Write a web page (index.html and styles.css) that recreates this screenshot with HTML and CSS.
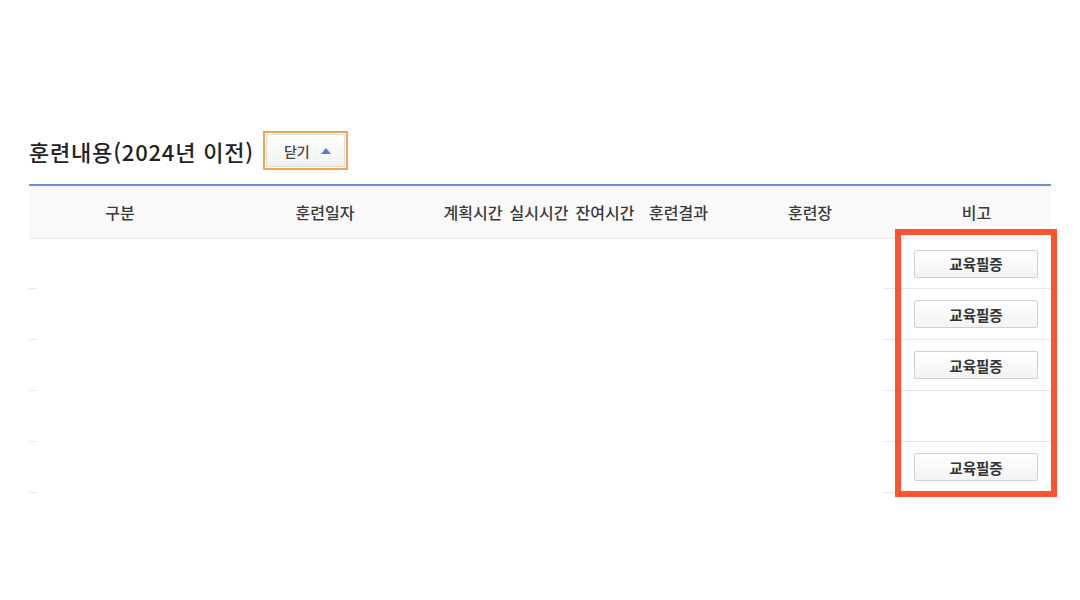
FILE: index.html
```html
<!DOCTYPE html>
<html lang="ko">
<head>
<meta charset="utf-8">
<link rel="stylesheet" href="styles.css">
</head>
<body>
<div class="page">
  <div class="title-row">
    <h2 class="title">훈련내용(2024년 이전)</h2>
    <div class="close-wrap">
      <button class="close-btn">닫기 <span class="tri"></span></button>
    </div>
  </div>
  <div class="table">
    <div class="thead">
      <div class="th c1">구분</div>
      <div class="th c2">훈련일자</div>
      <div class="th c3">계획시간</div>
      <div class="th c4">실시시간</div>
      <div class="th c5">잔여시간</div>
      <div class="th c6">훈련결과</div>
      <div class="th c7">훈련장</div>
      <div class="th c8">비고</div>
    </div>
    <div class="tbody">
      <div class="row"><div class="stub"></div><div class="fill"></div><div class="cell-r"><button class="cert">교육필증</button></div></div>
      <div class="row"><div class="stub"></div><div class="fill"></div><div class="cell-r"><button class="cert">교육필증</button></div></div>
      <div class="row"><div class="stub"></div><div class="fill"></div><div class="cell-r"><button class="cert">교육필증</button></div></div>
      <div class="row"><div class="stub"></div><div class="fill"></div><div class="cell-r"></div></div>
      <div class="row"><div class="stub"></div><div class="fill"></div><div class="cell-r"><button class="cert">교육필증</button></div></div>
    </div>
  </div>
  <div class="highlight"></div>
</div>
</body>
</html>
```
FILE: styles.css
```css
html, body {
  margin: 0;
  padding: 0;
  background: #ffffff;
}
body {
  font-family: "Noto Sans CJK KR", "Noto Sans", sans-serif;
  color: #333;
}
.page {
  position: relative;
  padding: 131px 0 0 29px;
  width: 1022px;
  height: 469px;
}
.title-row {
  display: flex;
  align-items: center;
  gap: 9px;
  height: 39px;
}
.title {
  margin: 0;
  font-size: 22px;
  font-weight: 500;
  color: #222;
  letter-spacing: 0.8px;
  line-height: 1;
}
.close-wrap {
  border: 2px solid #f3a250;
  padding: 1px;
  width: 79px;
  height: 33px;
  display: flex;
}
.close-btn {
  flex: 1;
  border: 1px solid #dcdcdc;
  background: linear-gradient(#ffffff, #f1f1f1);
  font-family: "Noto Sans CJK KR", sans-serif;
  font-size: 14px;
  font-weight: 500;
  color: #444;
  display: flex;
  align-items: center;
  justify-content: center;
  gap: 11px;
  padding: 0 0 0 4px;
}
.tri {
  width: 0;
  height: 0;
  border-left: 5px solid transparent;
  border-right: 5px solid transparent;
  border-bottom: 6px solid #4d82d6;
}
.table {
  margin-top: 14px;
  border-top: 2px solid #6e90d6;
}
.thead {
  display: flex;
  height: 52px;
  background: #f9f9f9;
  border-bottom: 1px solid #ececec;
}
.th {
  display: flex;
  align-items: center;
  justify-content: center;
  font-size: 16px;
  font-weight: 500;
  color: #3a3a3a;
  white-space: nowrap;
}
.c1 { width: 182px; }
.c2 { width: 228px; }
.c3 { width: 68px; }
.c4 { width: 64px; }
.c5 { width: 68px; }
.c6 { width: 79px; }
.c7 { width: 184px; }
.c8 { width: 149px; }
.row {
  display: flex;
  height: 51px;
}
.row:first-child {
  height: 50px;
}
.stub {
  width: 7px;
  border-bottom: 1px solid #e8e8e8;
}
.fill {
  flex: 1;
}
.cell-r {
  width: 167px;
  border-bottom: 1px solid #e8e8e8;
  display: flex;
  align-items: center;
  padding-left: 30px;
  box-sizing: border-box;
}
.cert {
  width: 124px;
  height: 28px;
  border: 1px solid #cfcfcf;
  border-radius: 2px;
  background: linear-gradient(#ffffff, #f3f3f3);
  font-family: "Noto Sans CJK KR", sans-serif;
  font-size: 14.5px;
  font-weight: 700;
  color: #333;
  padding: 0;
}
.highlight {
  position: absolute;
  left: 895px;
  top: 229px;
  width: 150px;
  height: 256px;
  border: 6px solid #ff5330;
}
```
